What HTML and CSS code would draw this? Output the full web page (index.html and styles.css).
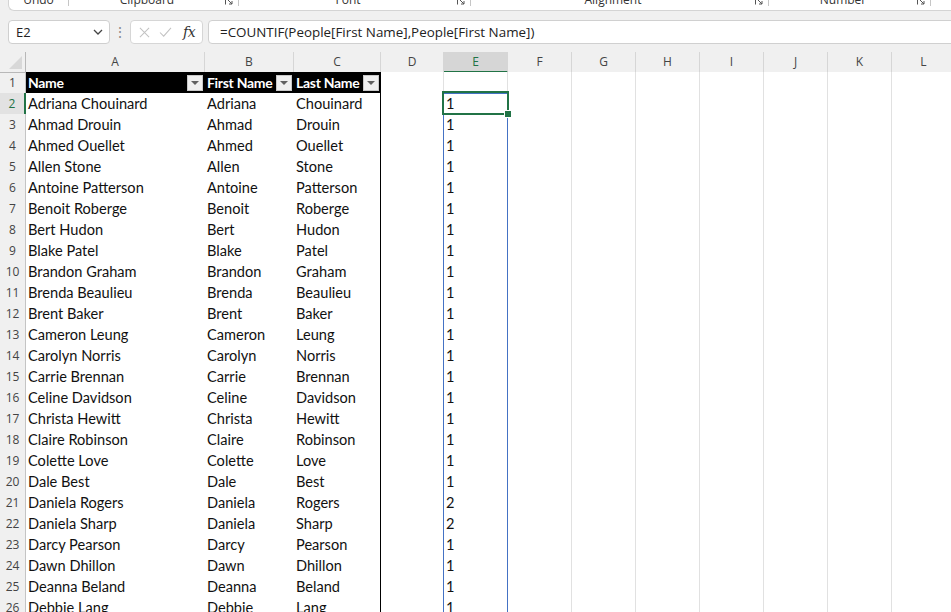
FILE: index.html
```html
<!DOCTYPE html>
<html>
<head>
<meta charset="utf-8">
<link rel="stylesheet" href="styles.css">
</head>
<body>
<div class="ribbon">
  <div class="grp g-undo"><span class="lbl">Undo</span></div><i class="sep"></i>
  <div class="grp g-clip"><span class="lbl">Clipboard</span><svg class="launch" viewBox="0 0 8 8"><path d="M0.5 0.5h7M0.5 0.5v7M2 2l5 5M4 7h3V4"/></svg></div><i class="sep"></i>
  <div class="grp g-font"><span class="lbl">Font</span><svg class="launch" viewBox="0 0 8 8"><path d="M0.5 0.5h7M0.5 0.5v7M2 2l5 5M4 7h3V4"/></svg></div><i class="sep"></i>
  <div class="grp g-align"><span class="lbl">Alignment</span><svg class="launch" viewBox="0 0 8 8"><path d="M0.5 0.5h7M0.5 0.5v7M2 2l5 5M4 7h3V4"/></svg></div><i class="sep"></i>
  <div class="grp g-num"><span class="lbl">Number</span><svg class="launch" viewBox="0 0 8 8"><path d="M0.5 0.5h7M0.5 0.5v7M2 2l5 5M4 7h3V4"/></svg></div><i class="sep"></i>
  <div class="grp g-rest"></div>
</div>

<div class="fbar">
  <div class="namebox"><span>E2</span><svg class="chev" viewBox="0 0 10 6"><path d="M1 1l4 4 4-4"/></svg></div>
  <div class="dots">⋮</div>
  <div class="fxbox">
    <svg class="ic" viewBox="0 0 12 12"><path d="M1 1l10 10M11 1L1 11"/></svg>
    <svg class="ic ck" viewBox="0 0 14 12"><path d="M1 6l4 4 8-9"/></svg>
    <span class="fx">fx</span>
  </div>
  <div class="formula">=COUNTIF(People[First Name],People[First Name])</div>
</div>

<div class="sheet">
  <div class="row chead">
    <div class="corner"><svg viewBox="0 0 14 14"><path d="M14 0V14H0Z"/></svg></div>
    <div class="ch">A</div><div class="ch">B</div><div class="ch">C</div><div class="ch">D</div><div class="ch csel">E</div><div class="ch">F</div><div class="ch">G</div><div class="ch">H</div><div class="ch">I</div><div class="ch">J</div><div class="ch">K</div><div class="ch">L</div>
  </div>
  <div class="row">
    <div class="rh">1</div>
    <div class="c th"><span>Name</span><i class="fb"></i></div>
    <div class="c th"><span>First Name</span><i class="fb"></i></div>
    <div class="c th tl"><span>Last Name</span><i class="fb"></i></div>
    <div class="c"></div><div class="c"></div><div class="c"></div><div class="c"></div><div class="c"></div><div class="c"></div><div class="c"></div><div class="c"></div><div class="c"></div>
  </div>
  <div class="row"><div class="rh rsel">2</div><div class="c t">Adriana Chouinard</div><div class="c t">Adriana</div><div class="c t tl">Chouinard</div><div class="c"></div><div class="c">1</div><div class="c"></div><div class="c"></div><div class="c"></div><div class="c"></div><div class="c"></div><div class="c"></div><div class="c"></div></div>
  <div class="row"><div class="rh">3</div><div class="c t">Ahmad Drouin</div><div class="c t">Ahmad</div><div class="c t tl">Drouin</div><div class="c"></div><div class="c">1</div><div class="c"></div><div class="c"></div><div class="c"></div><div class="c"></div><div class="c"></div><div class="c"></div><div class="c"></div></div>
  <div class="row"><div class="rh">4</div><div class="c t">Ahmed Ouellet</div><div class="c t">Ahmed</div><div class="c t tl">Ouellet</div><div class="c"></div><div class="c">1</div><div class="c"></div><div class="c"></div><div class="c"></div><div class="c"></div><div class="c"></div><div class="c"></div><div class="c"></div></div>
  <div class="row"><div class="rh">5</div><div class="c t">Allen Stone</div><div class="c t">Allen</div><div class="c t tl">Stone</div><div class="c"></div><div class="c">1</div><div class="c"></div><div class="c"></div><div class="c"></div><div class="c"></div><div class="c"></div><div class="c"></div><div class="c"></div></div>
  <div class="row"><div class="rh">6</div><div class="c t">Antoine Patterson</div><div class="c t">Antoine</div><div class="c t tl">Patterson</div><div class="c"></div><div class="c">1</div><div class="c"></div><div class="c"></div><div class="c"></div><div class="c"></div><div class="c"></div><div class="c"></div><div class="c"></div></div>
  <div class="row"><div class="rh">7</div><div class="c t">Benoit Roberge</div><div class="c t">Benoit</div><div class="c t tl">Roberge</div><div class="c"></div><div class="c">1</div><div class="c"></div><div class="c"></div><div class="c"></div><div class="c"></div><div class="c"></div><div class="c"></div><div class="c"></div></div>
  <div class="row"><div class="rh">8</div><div class="c t">Bert Hudon</div><div class="c t">Bert</div><div class="c t tl">Hudon</div><div class="c"></div><div class="c">1</div><div class="c"></div><div class="c"></div><div class="c"></div><div class="c"></div><div class="c"></div><div class="c"></div><div class="c"></div></div>
  <div class="row"><div class="rh">9</div><div class="c t">Blake Patel</div><div class="c t">Blake</div><div class="c t tl">Patel</div><div class="c"></div><div class="c">1</div><div class="c"></div><div class="c"></div><div class="c"></div><div class="c"></div><div class="c"></div><div class="c"></div><div class="c"></div></div>
  <div class="row"><div class="rh">10</div><div class="c t">Brandon Graham</div><div class="c t">Brandon</div><div class="c t tl">Graham</div><div class="c"></div><div class="c">1</div><div class="c"></div><div class="c"></div><div class="c"></div><div class="c"></div><div class="c"></div><div class="c"></div><div class="c"></div></div>
  <div class="row"><div class="rh">11</div><div class="c t">Brenda Beaulieu</div><div class="c t">Brenda</div><div class="c t tl">Beaulieu</div><div class="c"></div><div class="c">1</div><div class="c"></div><div class="c"></div><div class="c"></div><div class="c"></div><div class="c"></div><div class="c"></div><div class="c"></div></div>
  <div class="row"><div class="rh">12</div><div class="c t">Brent Baker</div><div class="c t">Brent</div><div class="c t tl">Baker</div><div class="c"></div><div class="c">1</div><div class="c"></div><div class="c"></div><div class="c"></div><div class="c"></div><div class="c"></div><div class="c"></div><div class="c"></div></div>
  <div class="row"><div class="rh">13</div><div class="c t">Cameron Leung</div><div class="c t">Cameron</div><div class="c t tl">Leung</div><div class="c"></div><div class="c">1</div><div class="c"></div><div class="c"></div><div class="c"></div><div class="c"></div><div class="c"></div><div class="c"></div><div class="c"></div></div>
  <div class="row"><div class="rh">14</div><div class="c t">Carolyn Norris</div><div class="c t">Carolyn</div><div class="c t tl">Norris</div><div class="c"></div><div class="c">1</div><div class="c"></div><div class="c"></div><div class="c"></div><div class="c"></div><div class="c"></div><div class="c"></div><div class="c"></div></div>
  <div class="row"><div class="rh">15</div><div class="c t">Carrie Brennan</div><div class="c t">Carrie</div><div class="c t tl">Brennan</div><div class="c"></div><div class="c">1</div><div class="c"></div><div class="c"></div><div class="c"></div><div class="c"></div><div class="c"></div><div class="c"></div><div class="c"></div></div>
  <div class="row"><div class="rh">16</div><div class="c t">Celine Davidson</div><div class="c t">Celine</div><div class="c t tl">Davidson</div><div class="c"></div><div class="c">1</div><div class="c"></div><div class="c"></div><div class="c"></div><div class="c"></div><div class="c"></div><div class="c"></div><div class="c"></div></div>
  <div class="row"><div class="rh">17</div><div class="c t">Christa Hewitt</div><div class="c t">Christa</div><div class="c t tl">Hewitt</div><div class="c"></div><div class="c">1</div><div class="c"></div><div class="c"></div><div class="c"></div><div class="c"></div><div class="c"></div><div class="c"></div><div class="c"></div></div>
  <div class="row"><div class="rh">18</div><div class="c t">Claire Robinson</div><div class="c t">Claire</div><div class="c t tl">Robinson</div><div class="c"></div><div class="c">1</div><div class="c"></div><div class="c"></div><div class="c"></div><div class="c"></div><div class="c"></div><div class="c"></div><div class="c"></div></div>
  <div class="row"><div class="rh">19</div><div class="c t">Colette Love</div><div class="c t">Colette</div><div class="c t tl">Love</div><div class="c"></div><div class="c">1</div><div class="c"></div><div class="c"></div><div class="c"></div><div class="c"></div><div class="c"></div><div class="c"></div><div class="c"></div></div>
  <div class="row"><div class="rh">20</div><div class="c t">Dale Best</div><div class="c t">Dale</div><div class="c t tl">Best</div><div class="c"></div><div class="c">1</div><div class="c"></div><div class="c"></div><div class="c"></div><div class="c"></div><div class="c"></div><div class="c"></div><div class="c"></div></div>
  <div class="row"><div class="rh">21</div><div class="c t">Daniela Rogers</div><div class="c t">Daniela</div><div class="c t tl">Rogers</div><div class="c"></div><div class="c">2</div><div class="c"></div><div class="c"></div><div class="c"></div><div class="c"></div><div class="c"></div><div class="c"></div><div class="c"></div></div>
  <div class="row"><div class="rh">22</div><div class="c t">Daniela Sharp</div><div class="c t">Daniela</div><div class="c t tl">Sharp</div><div class="c"></div><div class="c">2</div><div class="c"></div><div class="c"></div><div class="c"></div><div class="c"></div><div class="c"></div><div class="c"></div><div class="c"></div></div>
  <div class="row"><div class="rh">23</div><div class="c t">Darcy Pearson</div><div class="c t">Darcy</div><div class="c t tl">Pearson</div><div class="c"></div><div class="c">1</div><div class="c"></div><div class="c"></div><div class="c"></div><div class="c"></div><div class="c"></div><div class="c"></div><div class="c"></div></div>
  <div class="row"><div class="rh">24</div><div class="c t">Dawn Dhillon</div><div class="c t">Dawn</div><div class="c t tl">Dhillon</div><div class="c"></div><div class="c">1</div><div class="c"></div><div class="c"></div><div class="c"></div><div class="c"></div><div class="c"></div><div class="c"></div><div class="c"></div></div>
  <div class="row"><div class="rh">25</div><div class="c t">Deanna Beland</div><div class="c t">Deanna</div><div class="c t tl">Beland</div><div class="c"></div><div class="c">1</div><div class="c"></div><div class="c"></div><div class="c"></div><div class="c"></div><div class="c"></div><div class="c"></div><div class="c"></div></div>
  <div class="row"><div class="rh">26</div><div class="c t">Debbie Lang</div><div class="c t">Debbie</div><div class="c t tl">Lang</div><div class="c"></div><div class="c">1</div><div class="c"></div><div class="c"></div><div class="c"></div><div class="c"></div><div class="c"></div><div class="c"></div><div class="c"></div></div>

  <div class="spill"></div>
  <div class="active"><i class="handle"></i></div>
</div>
</body>
</html>
```

FILE: styles.css
```css
html, body {
  margin: 0;
  padding: 0;
}
body {
  width: 951px;
  height: 612px;
  overflow: hidden;
  background: #f0f0f0;
  font-family: "Open Sans", "Noto Sans", sans-serif;
  color: #222;
}

/* ribbon strip */
.ribbon {
  display: flex;
  height: 10px;
  margin-left: 8px;
  background: #fff;
  border-left: 1px solid #d4d4d4;
  border-bottom: 1px solid #d4d4d4;
  border-bottom-left-radius: 6px;
  overflow: hidden;
}
.grp {
  display: flex;
  align-items: flex-start;
  flex: none;
}
.lbl {
  flex: 1;
  text-align: center;
  font-size: 12px;
  line-height: 14px;
  margin-top: -7px;
  color: #333;
  white-space: nowrap;
}
.launch {
  width: 8px;
  height: 8px;
  margin: -3px 5px 0 0;
  fill: none;
  stroke: #555;
  stroke-width: 1;
}
.sep {
  flex: none;
  width: 1px;
  height: 6px;
  background: #c6c6c6;
}
.g-undo { width: 59px; }
.g-clip { width: 169px; }
.g-font { width: 231px; }
.g-align { width: 297px; }
.g-num { width: 161px; }
.g-rest { flex: 1; }

/* formula bar */
.fbar {
  display: flex;
  align-items: center;
  height: 24px;
  margin-top: 9px;
  padding-left: 8px;
}
.namebox {
  width: 102px;
  height: 24px;
  box-sizing: border-box;
  background: #fff;
  border: 1px solid #cfcfcf;
  border-radius: 4px;
  display: flex;
  align-items: center;
  justify-content: space-between;
  padding: 0 6px 0 7px;
  font-size: 13px;
  color: #222;
}
.chev {
  width: 10px;
  height: 6px;
  fill: none;
  stroke: #444;
  stroke-width: 1.3;
}
.dots {
  width: 20px;
  text-align: center;
  color: #8a8a8a;
  font-size: 14px;
  line-height: 24px;
}
.fxbox {
  width: 73px;
  height: 24px;
  box-sizing: border-box;
  background: #fff;
  border: 1px solid #d6d6d6;
  border-radius: 4px;
  display: flex;
  align-items: center;
  padding-left: 8px;
}
.ic {
  width: 11px;
  height: 11px;
  fill: none;
  stroke: #c2c2c2;
  stroke-width: 1.1;
  margin-right: 9px;
}
.ic.ck {
  width: 13px;
  margin-right: 11px;
}
.fx {
  font-family: "DejaVu Serif", "Liberation Serif", serif;
  font-style: italic;
  font-size: 14px;
  color: #333;
  letter-spacing: -0.5px;
}
.formula {
  flex: 1;
  margin-left: 5px;
  margin-right: -20px;
  height: 24px;
  box-sizing: border-box;
  background: #fff;
  border: 1px solid #d0d0d0;
  border-radius: 4px;
  padding-left: 11px;
  font-size: 13.4px;
  line-height: 22px;
  color: #222;
  white-space: nowrap;
}

/* sheet */
.sheet {
  position: relative;
  margin-top: 8px;
  width: 956px;
}
.row {
  display: grid;
  grid-template-columns: 26px 179px 89px 87px 63px repeat(8, 64px);
  height: 21px;
}
.row.chead {
  height: 20px;
}
.corner, .ch {
  box-sizing: border-box;
  background: #f0f0f0;
  border-right: 1px solid #d6d6d6;
  border-bottom: 1px solid #b8b8b8;
  text-align: center;
  font-size: 12px;
  line-height: 19px;
  color: #444;
}
.corner {
  position: relative;
  border-right-color: #b8b8b8;
}
.corner svg {
  position: absolute;
  right: 3px;
  bottom: 3px;
  width: 13px;
  height: 13px;
  fill: #d8d8d8;
}
.ch.csel {
  background: #d6d6d6;
  color: #217346;
  border-bottom: 2px solid #217346;
}
.rh {
  box-sizing: border-box;
  background: #f0f0f0;
  border-right: 1px solid #c4c4c4;
  border-bottom: 1px solid #dedede;
  text-align: center;
  font-size: 12px;
  line-height: 21px;
  color: #444;
}
.rh.rsel {
  background: #e2e2e2;
  color: #217346;
  border-right: 2px solid #217346;
}
.c {
  box-sizing: border-box;
  background: #fff;
  border-right: 1px solid #e1e1e1;
  border-bottom: 1px solid #e1e1e1;
  padding-left: 2px;
  font-family: "Lato", "Open Sans", sans-serif;
  font-size: 14.6px;
  line-height: 22px;
  color: #111;
  white-space: nowrap;
  overflow: hidden;
}
.c.t {
  border-bottom-color: #000;
  border-right-color: #fff;
}
.c.th {
  background: #000;
  color: #fff;
  font-weight: bold;
  font-size: 14px;
  letter-spacing: -0.3px;
  border-bottom-color: #000;
  border-right-color: #000;
  display: flex;
  align-items: center;
  justify-content: space-between;
  padding-right: 1px;
}
.c.tl {
  border-right-color: #000;
}
.fb {
  flex: none;
  position: relative;
  width: 16px;
  height: 16px;
  box-sizing: border-box;
  background: #efefef;
  border: 1px solid #c8c8c8;
}
.fb::after {
  content: "";
  position: absolute;
  left: 3px;
  top: 5px;
  border-left: 4px solid transparent;
  border-right: 4px solid transparent;
  border-top: 4px solid #606060;
}

/* spill range and active cell */
.spill {
  position: absolute;
  left: 443px;
  top: 41px;
  width: 65px;
  height: 560px;
  box-sizing: border-box;
  border: 1px solid #4472c4;
}
.active {
  position: absolute;
  left: 442px;
  top: 39px;
  width: 67px;
  height: 24px;
  box-sizing: border-box;
  border: 2px solid #217346;
}
.handle {
  position: absolute;
  right: -5px;
  bottom: -5px;
  width: 6px;
  height: 6px;
  background: #217346;
  border: 1px solid #fff;
}
```
